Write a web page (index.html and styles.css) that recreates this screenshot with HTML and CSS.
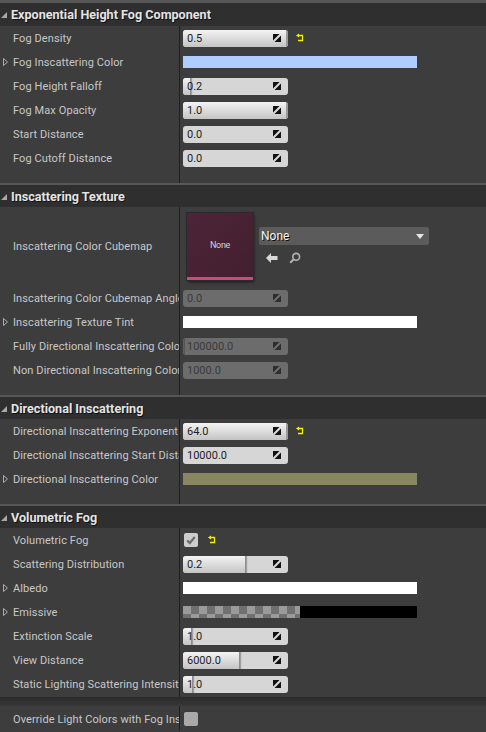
FILE: index.html
```html
<!DOCTYPE html>
<html>
<head>
<meta charset="utf-8">
<link rel="stylesheet" href="styles.css">
</head>
<body>
<div class="panel">

  <section class="cat cat-first">
    <div class="cat-head"><svg class="caret" viewBox="0 0 6 6" width="6" height="6"><path d="M6 0V6H0Z"/></svg><span>Exponential Height Fog Component</span></div>
    <div class="cat-body">
      <div class="row"><div class="lbl">Fog Density</div><div class="val"><div class="num"><div class="fill full"></div><span class="txt">0.5</span><svg class="spin" viewBox="0 0 8 8"><path d="M0 0H6.5L0 6.5Z M8 1.5V8H1.5Z"/></svg></div><svg class="reset" viewBox="0 0 8 8"><path class="rs" d="M2.5 1.5H6.5V6.5H2"/><path class="rh" d="M0 1.5L3 -0.5V3.5Z"/></svg></div></div>
      <div class="row"><div class="lbl"><svg class="exp" viewBox="0 0 5 8"><path d="M0.5 0.5L4.5 4L0.5 7.5Z"/></svg>Fog Inscattering Color</div><div class="val"><div class="swatch sw-blue"></div></div></div>
      <div class="row"><div class="lbl">Fog Height Falloff</div><div class="val"><div class="num"><div class="fill" style="width:8px"></div><span class="txt">0.2</span><svg class="spin" viewBox="0 0 8 8"><path d="M0 0H6.5L0 6.5Z M8 1.5V8H1.5Z"/></svg></div></div></div>
      <div class="row"><div class="lbl">Fog Max Opacity</div><div class="val"><div class="num"><div class="fill full"></div><span class="txt">1.0</span><svg class="spin" viewBox="0 0 8 8"><path d="M0 0H6.5L0 6.5Z M8 1.5V8H1.5Z"/></svg></div></div></div>
      <div class="row"><div class="lbl">Start Distance</div><div class="val"><div class="num"><span class="txt">0.0</span><svg class="spin" viewBox="0 0 8 8"><path d="M0 0H6.5L0 6.5Z M8 1.5V8H1.5Z"/></svg></div></div></div>
      <div class="row"><div class="lbl">Fog Cutoff Distance</div><div class="val"><div class="num"><span class="txt">0.0</span><svg class="spin" viewBox="0 0 8 8"><path d="M0 0H6.5L0 6.5Z M8 1.5V8H1.5Z"/></svg></div></div></div>
    </div>
  </section>

  <section class="cat">
    <div class="cat-head"><svg class="caret" viewBox="0 0 6 6" width="6" height="6"><path d="M6 0V6H0Z"/></svg><span>Inscattering Texture</span></div>
    <div class="cat-body">
      <div class="row row-tall"><div class="lbl">Inscattering Color Cubemap</div><div class="val val-asset">
        <div class="thumb"><span>None</span></div>
        <div class="asset-side">
          <div class="combo"><span>None</span><svg class="combo-arrow" viewBox="0 0 8 5"><path d="M0 0H8L4 5Z"/></svg></div>
          <div class="asset-tools">
            <svg class="tool" viewBox="0 0 12 10" width="12" height="10"><path d="M0 5L5 0V3H11.5V7H5V10Z"/></svg>
            <svg class="tool" viewBox="0 0 12 12" width="12" height="12"><circle cx="7.2" cy="4.8" r="3.4" fill="none" stroke-width="1.6"/><path d="M4.6 7.4L1.2 10.8" fill="none" stroke-width="2"/></svg>
          </div>
        </div>
      </div></div>
      <div class="row"><div class="lbl">Inscattering Color Cubemap Angle</div><div class="val"><div class="num num-off"><span class="txt">0.0</span><svg class="spin" viewBox="0 0 8 8"><path d="M0 0H6.5L0 6.5Z M8 1.5V8H1.5Z"/></svg></div></div></div>
      <div class="row"><div class="lbl"><svg class="exp" viewBox="0 0 5 8"><path d="M0.5 0.5L4.5 4L0.5 7.5Z"/></svg>Inscattering Texture Tint</div><div class="val"><div class="swatch sw-white"></div></div></div>
      <div class="row"><div class="lbl">Fully Directional Inscattering Color Distance</div><div class="val"><div class="num num-off"><div class="fill fill-off" style="width:2px"></div><span class="txt">100000.0</span><svg class="spin" viewBox="0 0 8 8"><path d="M0 0H6.5L0 6.5Z M8 1.5V8H1.5Z"/></svg></div></div></div>
      <div class="row"><div class="lbl">Non Directional Inscattering Color Distance</div><div class="val"><div class="num num-off"><span class="txt">1000.0</span><svg class="spin" viewBox="0 0 8 8"><path d="M0 0H6.5L0 6.5Z M8 1.5V8H1.5Z"/></svg></div></div></div>
    </div>
  </section>

  <section class="cat">
    <div class="cat-head"><svg class="caret" viewBox="0 0 6 6" width="6" height="6"><path d="M6 0V6H0Z"/></svg><span>Directional Inscattering</span></div>
    <div class="cat-body">
      <div class="row"><div class="lbl">Directional Inscattering Exponent</div><div class="val"><div class="num"><div class="fill full"></div><span class="txt">64.0</span><svg class="spin" viewBox="0 0 8 8"><path d="M0 0H6.5L0 6.5Z M8 1.5V8H1.5Z"/></svg></div><svg class="reset" viewBox="0 0 8 8"><path class="rs" d="M2.5 1.5H6.5V6.5H2"/><path class="rh" d="M0 1.5L3 -0.5V3.5Z"/></svg></div></div>
      <div class="row"><div class="lbl">Directional Inscattering Start Distance</div><div class="val"><div class="num"><span class="txt">10000.0</span><svg class="spin" viewBox="0 0 8 8"><path d="M0 0H6.5L0 6.5Z M8 1.5V8H1.5Z"/></svg></div></div></div>
      <div class="row"><div class="lbl"><svg class="exp" viewBox="0 0 5 8"><path d="M0.5 0.5L4.5 4L0.5 7.5Z"/></svg>Directional Inscattering Color</div><div class="val"><div class="swatch sw-olive"></div></div></div>
    </div>
  </section>

  <section class="cat cat-last">
    <div class="cat-head"><svg class="caret" viewBox="0 0 6 6" width="6" height="6"><path d="M6 0V6H0Z"/></svg><span>Volumetric Fog</span></div>
    <div class="cat-body">
      <div class="row"><div class="lbl">Volumetric Fog</div><div class="val"><div class="check on"><svg viewBox="0 0 12 12" width="12" height="12"><path d="M2.2 6.4L4.8 9L9.8 3" fill="none" stroke-width="2.2"/></svg></div><svg class="reset reset-check" viewBox="0 0 8 8"><path class="rs" d="M2.5 1.5H6.5V6.5H2"/><path class="rh" d="M0 1.5L3 -0.5V3.5Z"/></svg></div></div>
      <div class="row"><div class="lbl">Scattering Distribution</div><div class="val"><div class="num"><div class="fill" style="width:63px"></div><span class="txt">0.2</span><svg class="spin" viewBox="0 0 8 8"><path d="M0 0H6.5L0 6.5Z M8 1.5V8H1.5Z"/></svg></div></div></div>
      <div class="row"><div class="lbl"><svg class="exp" viewBox="0 0 5 8"><path d="M0.5 0.5L4.5 4L0.5 7.5Z"/></svg>Albedo</div><div class="val"><div class="swatch sw-white"></div></div></div>
      <div class="row"><div class="lbl"><svg class="exp" viewBox="0 0 5 8"><path d="M0.5 0.5L4.5 4L0.5 7.5Z"/></svg>Emissive</div><div class="val"><div class="swatch sw-emissive"><div class="checker"></div><div class="black"></div></div></div></div>
      <div class="row"><div class="lbl">Extinction Scale</div><div class="val"><div class="num"><div class="fill" style="width:9px"></div><span class="txt">1.0</span><svg class="spin" viewBox="0 0 8 8"><path d="M0 0H6.5L0 6.5Z M8 1.5V8H1.5Z"/></svg></div></div></div>
      <div class="row"><div class="lbl">View Distance</div><div class="val"><div class="num"><div class="fill" style="width:57px"></div><span class="txt">6000.0</span><svg class="spin" viewBox="0 0 8 8"><path d="M0 0H6.5L0 6.5Z M8 1.5V8H1.5Z"/></svg></div></div></div>
      <div class="row"><div class="lbl">Static Lighting Scattering Intensity</div><div class="val"><div class="num"><div class="fill" style="width:10px"></div><span class="txt">1.0</span><svg class="spin" viewBox="0 0 8 8"><path d="M0 0H6.5L0 6.5Z M8 1.5V8H1.5Z"/></svg></div></div></div>
    </div>
    <div class="adv-band"></div>
    <div class="cat-body cat-body-adv">
      <div class="row"><div class="lbl">Override Light Colors with Fog Inscattering Colors</div><div class="val"><div class="check"></div></div></div>
    </div>
  </section>

</div>
</body>
</html>
```

FILE: styles.css
```css
* { box-sizing: border-box; }

html, body {
  margin: 0;
  padding: 0;
  background: #3d3d3d;
}

body {
  font-family: Roboto, "Liberation Sans", sans-serif;
  font-size: 11px;
  color: #c8c8c8;
  width: 486px;
  height: 732px;
  overflow: hidden;
}

.panel {
  display: flex;
  flex-direction: column;
}

.cat {
  border-top: 2px solid #575757;
}

.cat-first {
  border-top-width: 3px;
}

.cat-head {
  height: 22px;
  background: #2f2f2f;
  display: flex;
  align-items: center;
  padding-left: 1px;
  font-weight: bold;
  font-size: 12.6px;
  color: #e4e4e4;
  text-shadow: 1px 1px 0 #111;
}

.cat-first .cat-head {
  height: 23px;
}

.caret {
  fill: #a8a8a8;
  margin-right: 4px;
  margin-top: 1px;
}

.cat-body {
  padding-bottom: 13px;
  background: linear-gradient(to right, transparent 179px, #1f1f1f 179px, #1f1f1f 180px, transparent 180px);
}

.cat-last > .cat-body {
  padding-bottom: 1px;
}

.cat-last > .cat-body-adv {
  padding-top: 1px;
  padding-bottom: 0;
}

.adv-band {
  height: 9px;
  background: linear-gradient(to bottom, #2a2a2a, #303030 40%, #383838);
}

.row {
  display: grid;
  grid-template-columns: 179px 1fr;
  align-items: center;
  height: 24px;
}

.row-tall {
  height: 79px;
}

.lbl {
  display: flex;
  align-items: center;
  padding-left: 13px;
  white-space: nowrap;
  overflow: hidden;
  letter-spacing: 0.1px;
}

.exp {
  width: 5px;
  height: 8px;
  flex: none;
  margin-left: -10px;
  margin-right: 5px;
  fill: none;
  stroke: #b8b8b8;
  stroke-width: 0.9;
}

.val {
  display: flex;
  align-items: center;
  padding-left: 4px;
  height: 100%;
}

.num {
  position: relative;
  width: 105px;
  height: 17px;
  border-radius: 3px;
  background: #d6d6d6;
  display: flex;
  align-items: center;
  overflow: hidden;
  color: #1e1e1e;
}

.num-off {
  background: #6c6c6c;
  color: #3a3a3a;
}

.fill {
  position: absolute;
  left: 0;
  top: 0;
  bottom: 0;
  background: linear-gradient(to bottom, #f4f4f4, #dedede 45%, #c4c4c4);
  border-right: 1px solid #8e8e8e;
  box-shadow: 1px 0 1px rgba(0,0,0,0.25);
}

.fill.full {
  width: 100%;
  border-right: 2px solid #9a9a9a;
}

.fill-off {
  background: #606060;
  border-right: 1px solid #555;
  box-shadow: none;
}

.txt {
  position: relative;
  padding-left: 4px;
  flex: 1;
}

.spin {
  position: relative;
  width: 8px;
  height: 8px;
  margin-right: 7px;
  fill: #111;
}

.num-off .spin {
  fill: #2e2e2e;
}

.reset {
  width: 8px;
  height: 8px;
  margin-left: 8px;
  overflow: visible;
}

.reset .rs {
  fill: none;
  stroke: #f2f200;
  stroke-width: 1.3;
}

.reset .rh {
  fill: #f2f200;
}

.reset-check {
  margin-left: 10px;
}

.swatch {
  width: 234px;
  height: 12px;
}

.sw-blue { background: #afcdfe; }
.sw-white { background: #ffffff; }
.sw-olive { background: #878762; }

.sw-emissive {
  display: flex;
}

.checker {
  width: 117px;
  background-color: #6f6f6f;
  background-image: repeating-conic-gradient(#707070 0 25%, #9a9a9a 0 50%);
  background-size: 16px 16px;
}

.black {
  flex: 1;
  background: #000;
}

.check {
  width: 14px;
  height: 14px;
  border-radius: 2px;
  background: #a9a9a9;
  display: flex;
  align-items: center;
  justify-content: center;
  margin-left: 1px;
}

.check.on {
  background: #cdcdcd;
}

.check svg path {
  stroke: #6e6e6e;
}

.val-asset {
  align-items: flex-start;
}

.thumb {
  margin-top: 6px;
  margin-left: 4px;
  width: 66px;
  height: 67px;
  background: linear-gradient(135deg, #4e2438, #41202f);
  border-bottom: 3px solid #d2457f;
  box-shadow: 0 0 0 1px #2a2a2a, 1px 2px 3px rgba(0,0,0,0.6);
  display: flex;
  align-items: center;
  justify-content: center;
  font-size: 9px;
  color: #d8d0d4;
  letter-spacing: -0.3px;
}

.asset-side {
  margin-left: 6px;
  margin-top: 20px;
  display: flex;
  flex-direction: column;
}

.combo {
  width: 170px;
  height: 18px;
  border-radius: 2px;
  background: #5b5b5b;
  display: flex;
  align-items: center;
  justify-content: space-between;
  padding: 0 5px 0 2px;
  font-size: 12px;
  color: #f4f4f4;
  text-shadow: 1px 1px 0 #111;
}

.combo-arrow {
  width: 8px;
  height: 5px;
  fill: #e6e6e6;
}

.asset-tools {
  display: flex;
  align-items: center;
  gap: 11px;
  margin-top: 7px;
  padding-left: 7px;
}

.tool {
  fill: #d8d8d8;
  stroke: #b4b4b4;
}

.tool:first-child {
  stroke: none;
}
```
